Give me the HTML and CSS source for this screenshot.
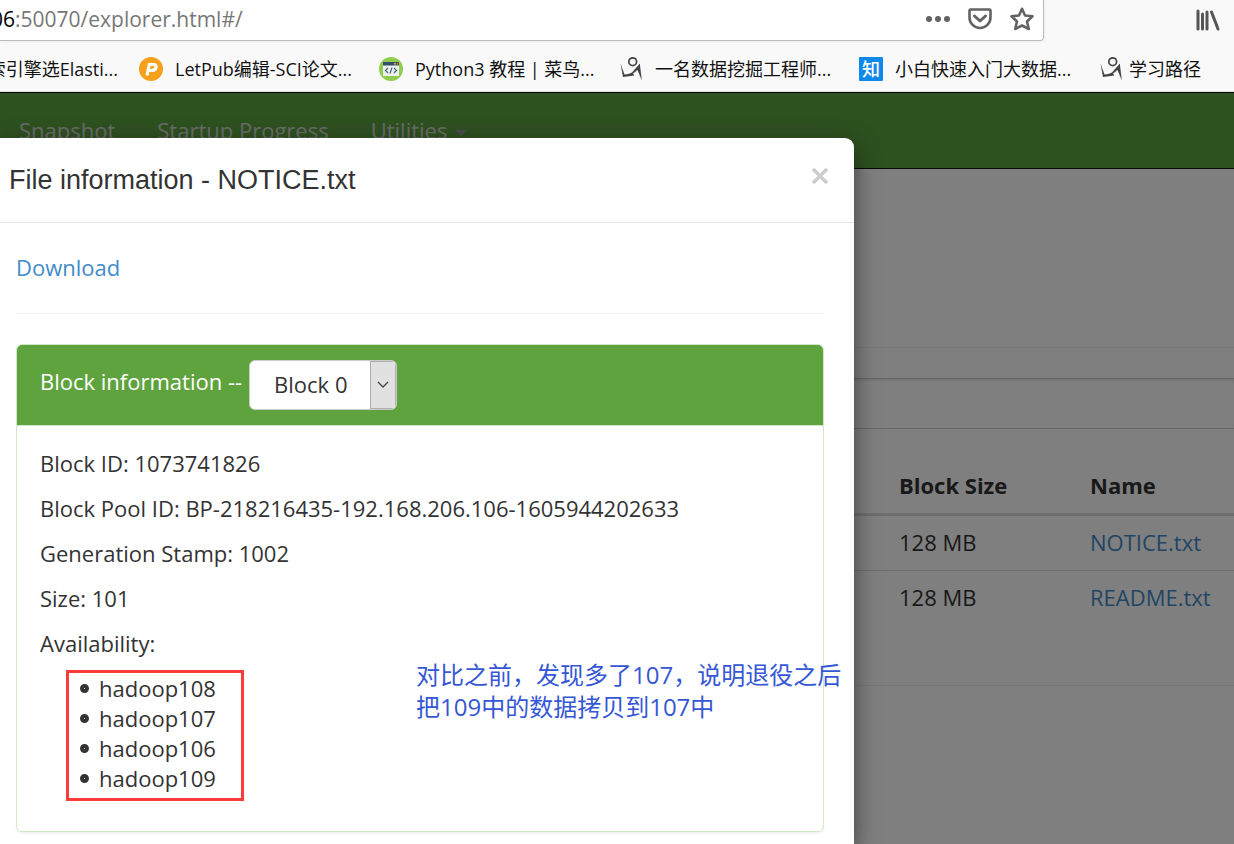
FILE: index.html
```html
<!DOCTYPE html>
<html lang="zh-CN">
<head>
  <meta charset="UTF-8" />
  <title>Browsing HDFS</title>
  <link rel="stylesheet" href="styles.css">
</head>
<body>
  <svg class="defs" aria-hidden="true">
    <symbol id="figure" viewBox="0 0 24 24">
      <circle cx="13.700" cy="4.700" r="3.900" fill="none" stroke="#444" stroke-width="1.700"/>
      <path d="M1.500 6.500L5.500 17.500L14 16.800L15.500 18.500L4 20Z" fill="#444"/>
      <path d="M7 18L13 15.500L20.800 6.500L22.800 23.500L18.500 13L13 17.500Z" fill="#444"/>
    </symbol>
  </svg>

  <!-- Browser toolbar -->
  <header class="browser">
    <div class="toolbar">
      <div class="urlbar">
        <div class="url"><span class="host">06</span>:50070/explorer.html#/</div>
        <button class="tool" type="button" aria-label="Page actions">
          <svg width="24" height="24" viewBox="0 0 24 24" fill="#636363"><circle cx="3" cy="12" r="3"/><circle cx="12" cy="12" r="3"/><circle cx="21" cy="12" r="3"/></svg>
        </button>
        <button class="tool" type="button" aria-label="Pocket">
          <svg width="24" height="24" viewBox="0 0 24 24" fill="none" stroke="#636363" stroke-width="2.600" stroke-linejoin="round" stroke-linecap="round"><path d="M2.500 2.500H21.500Q22.500 2.500 22.500 4V10.500A10.500 10.500 0 0 1 1.500 10.500V4Q1.500 2.500 2.500 2.500Z"/><path d="M6.500 9L12 14L17.500 9" stroke-width="3"/></svg>
        </button>
        <button class="tool" type="button" aria-label="Bookmark this page">
          <svg width="24" height="24" viewBox="0 0 24 24" fill="none" stroke="#636363" stroke-width="2.600" stroke-linejoin="round"><path d="M12 1.800L15 8.500L22.500 9.200L17 14.500L18.800 22L12 18.500L5.200 22L7 14.500L1.500 9.200L9 8.500Z"/></svg>
        </button>
      </div>
      <button class="tool library" type="button" aria-label="Library">
        <svg width="24" height="24" viewBox="0 0 24 24" fill="none" stroke="#555" stroke-width="3" stroke-linecap="round"><path d="M2 3V21M6.500 6V21M11 4V21M15.500 4L22 21"/></svg>
      </button>
    </div>
    <nav class="bookmarks">
      <a class="bookmark first" href="#"><span>索引擎选Elasti...</span></a>
      <a class="bookmark" href="#">
        <svg width="24" height="24" viewBox="0 0 24 24"><circle cx="12" cy="12" r="12" fill="#f7a01c"/><path d="M8 18.500L10.300 7.500H14.500Q17.700 7.500 17 10.500Q16.200 13.500 12.500 13.500H9.500" fill="none" stroke="#fff" stroke-width="3.200"/></svg>
        <span>LetPub编辑-SCI论文...</span>
      </a>
      <a class="bookmark" href="#">
        <svg width="24" height="24" viewBox="0 0 24 24"><circle cx="12" cy="12" r="12" fill="#8fcc4f"/><path d="M4 5H20V19H4Z" fill="#eef0f0"/><path d="M4 5H20V8.500H4Z" fill="#31506a"/><circle cx="16" cy="6.800" r="1" fill="#e8ba34"/><circle cx="18.500" cy="6.800" r="1" fill="#d75b45"/><path d="M9 11L6.500 13.500L9 16M15 11L17.500 13.500L15 16M13 10.500L11 16.500" fill="none" stroke="#49677d" stroke-width="1.200"/></svg>
        <span>Python3 教程 | 菜鸟...</span>
      </a>
      <a class="bookmark" href="#">
        <svg width="24" height="24"><use href="#figure"/></svg>
        <span>一名数据挖掘工程师...</span>
      </a>
      <a class="bookmark" href="#">
        <b class="zhihu">知</b>
        <span>小白快速入门大数据...</span>
      </a>
      <a class="bookmark last" href="#">
        <svg width="24" height="24"><use href="#figure"/></svg>
        <span>学习路径</span>
      </a>
    </nav>
  </header>

  <main class="page">
    <nav class="navbar">
      <a href="#">Snapshot</a>
      <a href="#">Startup Progress</a>
      <a href="#">Utilities <i class="caret"></i></a>
    </nav>
    <div class="page-header"></div>
    <input class="path" type="text" aria-label="Directory">
    <table class="files">
      <thead>
        <tr><td></td><th>Block Size</th><th>Name</th></tr>
      </thead>
      <tbody>
        <tr><td></td><td>128 MB</td><td><a href="#">NOTICE.txt</a></td></tr>
        <tr><td></td><td>128 MB</td><td><a href="#">README.txt</a></td></tr>
      </tbody>
    </table>
    <hr class="footer-line">

    <!-- File info modal -->
    <div class="backdrop">
      <div class="modal" role="dialog" aria-labelledby="modalTitle">
        <div class="modal-header">
          <h4 id="modalTitle">File information - NOTICE.txt</h4>
          <button class="close" type="button" aria-label="Close">
            <svg width="18" height="18" viewBox="0 0 18 18"><path d="M2 2L16 16M16 2L2 16" stroke="#ccc" stroke-width="3.500"/></svg>
          </button>
        </div>
        <div class="modal-body">
          <a class="download" href="#">Download</a>
          <hr>
          <section class="panel">
            <div class="panel-heading">
              <label for="block">Block information --</label>
              <div class="select">
                <select id="block"><option>Block 0</option></select>
                <span class="arrow"><svg width="12" height="8" viewBox="0 0 12 8"><path d="M1 1L6 6L11 1" fill="none" stroke="#444" stroke-width="1.300"/></svg></span>
              </div>
            </div>
            <div class="panel-body">
              <p>Block ID: 1073741826</p>
              <p>Block Pool ID: BP-218216435-192.168.206.106-1605944202633</p>
              <p>Generation Stamp: 1002</p>
              <p>Size: 101</p>
              <p>Availability:</p>
              <ul>
                <li>hadoop108</li>
                <li>hadoop107</li>
                <li>hadoop106</li>
                <li>hadoop109</li>
              </ul>
              <div class="note">对比之前，发现多了107，说明退役之后<br>把109中的数据拷贝到107中</div>
            </div>
          </section>
        </div>
      </div>
    </div>
  </main>
</body>
</html>
```
FILE: styles.css
```css
*,
*::before {
  box-sizing: border-box;
}
body {
  margin: 0;
  height: 100vh;
  display: flex;
  flex-direction: column;
  overflow: hidden;
  font: 22px/30px "Open Sans", "Noto Sans CJK SC", sans-serif;
  color: #333;
}
a {
  color: #428bca;
  text-decoration: none;
}
button {
  padding: 0;
  border: 0;
  background: none;
}
svg {
  display: block;
  flex: none;
}
.defs {
  position: absolute;
  width: 0;
  height: 0;
}

/* Browser toolbar */
.browser {
  background: #f9f9fa;
  border-bottom: 1px solid #ddd;
}
.toolbar {
  display: flex;
  justify-content: space-between;
  height: 41px;
}
.urlbar {
  flex: 1;
  display: flex;
  align-items: center;
  gap: 18px;
  padding: 0 9px 2px 0;
  background: #fff;
  border: solid #bbb;
  border-width: 0 1px 1px 0;
  border-radius: 0 0 4px 0;
  box-shadow: 0 1px 4px rgba(0,0,0,0.06);
}
.url {
  flex: 1;
  overflow: hidden;
  color: #777;
  font-size: 21px;
  text-indent: -9px;
}
.host {
  color: #000;
}
.library {
  margin: 0 14px 0 152px;
  padding-bottom: 2px;
}
.bookmarks {
  display: flex;
  height: 50px;
  padding-top: 6px;
  overflow: hidden;
  font-size: 18px;
}
.bookmark {
  flex: 0 0 240px;
  display: flex;
  align-items: center;
  gap: 12px;
  color: #111;
  white-space: nowrap;
}
.bookmark.first {
  flex-basis: 139px;
  justify-content: flex-end;
  padding-right: 21px;
  overflow: hidden;
}
.bookmark.last {
  gap: 6px;
}
.zhihu {
  width: 24px;
  border-radius: 1px;
  background: #0f88eb;
  color: #fff;
  font-weight: 500;
  line-height: 24px;
  text-align: center;
}

/* Page */
.page {
  flex: 1;
  position: relative;
  min-height: 0;
  background: #fff;
}
.navbar {
  display: flex;
  gap: 42px;
  height: 77px;
  padding: 22px 19px;
  background: #5ca240;
  border: solid #101010;
  border-width: 1px 0;
}
.navbar a {
  color: #d5d5d5;
}
.caret {
  display: inline-block;
  margin-left: 2px;
  border: 6px solid transparent;
  border-top-color: #999;
  border-bottom: 0;
  vertical-align: middle;
}
.page-header {
  height: 179px;
  margin-bottom: 30px;
  border-bottom: 1px solid #eee;
}
.path {
  display: block;
  width: 100%;
  height: 51px;
  border: solid #ccc;
  border-width: 1px 0;
  box-shadow: inset 0 2px 2px rgba(0,0,0,0.08);
}
.files {
  width: 100%;
  margin-top: 30px;
  border-collapse: collapse;
  table-layout: fixed;
  text-align: left;
}
.files th,
.files td {
  padding: 11px 15px 13px;
  border-bottom: 1px solid #ddd;
}
.files thead th,
.files thead td {
  border-bottom-width: 3px;
}
.files th:nth-child(2) {
  width: 191px;
}
.files th:nth-child(3) {
  width: 159px;
}
.files tbody tr:last-child td {
  border-bottom: 0;
}
.footer-line {
  margin: 60px 0 0;
  border: 0;
  border-top: 1px solid #eee;
}

/* Modal */
.backdrop {
  position: absolute;
  inset: 0;
  display: flex;
  padding: 46px 380px 0 0;
  background: rgba(0,0,0,0.5);
  overflow: hidden;
}
.modal {
  flex: 1;
  background: #fff;
  border-radius: 0 9px 0 0;
  box-shadow: 0 8px 23px rgba(0,0,0,0.5);
}
.modal-header {
  display: flex;
  justify-content: space-between;
  align-items: center;
  height: 85px;
  padding: 0 25px 0 9px;
  border-bottom: 1px solid #e5e5e5;
}
.modal-header h4 {
  margin: 0;
  font: 27px/30px "Liberation Sans", Arial, sans-serif;
}
.close {
  padding-bottom: 8px;
}
.modal-body {
  padding: 29px 30px 30px 16px;
}
.download {
  display: block;
}
.modal-body hr {
  margin: 31px 0 30px;
  border: 0;
  border-top: 1px solid #eee;
}
.panel {
  border: 1px solid #d0e9c6;
  border-radius: 6px;
  box-shadow: 0 2px 2px rgba(0,0,0,0.05);
}
.panel-heading {
  display: flex;
  gap: 7px;
  height: 81px;
  padding: 15px 23px;
  background: #5fa33e;
  border-bottom: 1px solid #d0e9c6;
  border-radius: 5px 5px 0 0;
  color: #fff;
}
.panel-heading label {
  padding-top: 6px;
}
.select {
  display: flex;
  height: 50px;
  width: 148px;
  background: #fff;
  border: 1px solid #ccc;
  border-radius: 6px;
  overflow: hidden;
}
.select select {
  flex: 1;
  min-width: 0;
  padding: 0 0 2px 24px;
  border: 0;
  background: none;
  appearance: none;
  font: inherit;
  color: #333;
}
.arrow {
  display: flex;
  align-items: center;
  justify-content: center;
  width: 26px;
  background: #e1e1e1;
  border: 1px solid #adadad;
}
.panel-body {
  position: relative;
  padding: 22px 23px 30px;
}
.panel-body p {
  margin: 0 0 15px;
}
.panel-body ul {
  width: 178px;
  margin: -3px 0 0 26px;
  padding: 0 0 5px 11px;
  border: 3px solid #fc3b3b;
  list-style: none;
}
.panel-body li {
  display: flex;
  align-items: center;
  gap: 10px;
}
.panel-body li::before {
  content: "";
  width: 9px;
  height: 9px;
  border: 4px solid #333;
  border-radius: 50%;
}
/* Annotation over the panel */
.note {
  position: absolute;
  left: 399px;
  top: 233px;
  color: #3557d6;
  font: 24px/32px "Open Sans", "Noto Sans CJK SC", sans-serif;
  white-space: nowrap;
}
```
